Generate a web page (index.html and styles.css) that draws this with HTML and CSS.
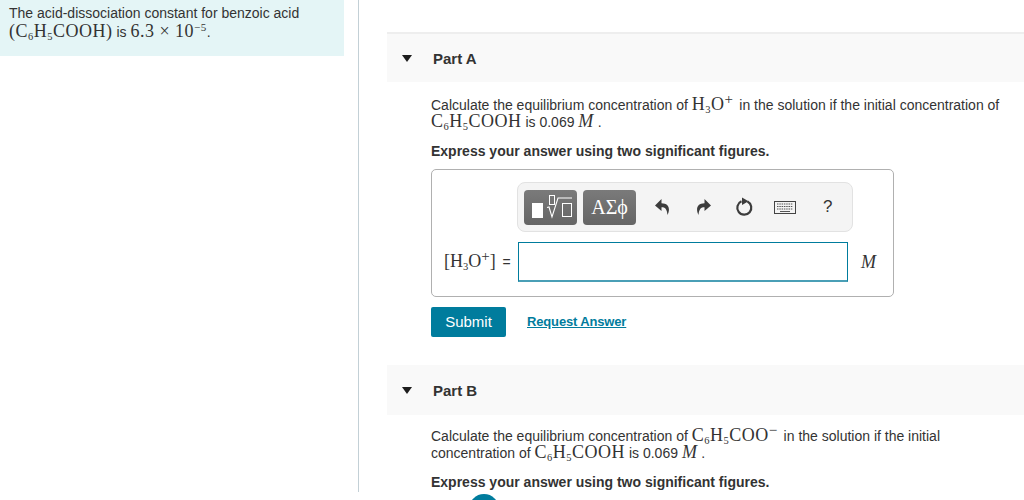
FILE: index.html
```html
<!DOCTYPE html>
<html lang="en">
<head>
<meta charset="utf-8">
<title>Benzoic acid</title>
<link rel="stylesheet" href="styles.css">
</head>
<body>
<div class="page">
  <aside class="left">
    <div class="intro">
      <div>The acid-dissociation constant for benzoic acid</div>
      <div class="intro-math"><span class="m big">(C<sub>6</sub>H<sub>5</sub>COOH)</span> is <span class="m big">6.3 × 10<sup class="sm">−5</sup></span>.</div>
    </div>
  </aside>
  <main class="right">
    <section class="part part-a">
      <header class="part-head">
        <span class="tri"></span><span class="part-title">Part A</span>
      </header>
      <div class="body">
        <p class="q">Calculate the equilibrium concentration of <span class="m big">H<sub>3</sub>O<sup>+</sup></span> in the solution if the initial concentration of<br><span class="m big">C<sub>6</sub>H<sub>5</sub>COOH</span> is 0.069 <span class="m big i">M</span> .</p>
        <p class="ins">Express your answer using two significant figures.</p>
        <div class="answer">
          <div class="toolbar-row">
            <div class="toolbar">
              <button class="tbtn tbtn-tpl" aria-label="Templates">
                <svg width="53" height="35" viewBox="0 0 53 35">
                  <rect x="8" y="13" width="11" height="15" fill="#fff"/>
                  <rect x="25.500" y="5.500" width="5" height="9" fill="none" stroke="#fff"/>
                  <path d="M23 17.500l2 -.5 3 10 6-19h14" fill="none" stroke="#fff" stroke-width="1.100"/>
                  <rect x="38.500" y="13.500" width="9" height="13" fill="none" stroke="#fff"/>
                </svg>
              </button>
              <button class="tbtn tbtn-sym">ΑΣϕ</button>
              <div class="tools">
                <svg class="tool" width="16" height="18" viewBox="0 0 16 18"><path d="M7.500 1L1 7.500 7.500 13V9.300C11 9.300 13 11 13.500 17 16.500 11 15 5.300 7.500 5.200Z" fill="#3c3c3c"/></svg>
                <svg class="tool" width="16" height="18" viewBox="0 0 16 18"><path d="M8.500 1L15 7.500 8.500 13V9.300C5 9.300 3 11 2.500 17-.5 11 1 5.300 8.500 5.200Z" fill="#3c3c3c"/></svg>
                <svg class="tool" width="18" height="20" viewBox="0 0 18 20"><path d="M6.500 4.300A7 7 0 1 0 12.500 4.500" fill="none" stroke="#3c3c3c" stroke-width="2.200"/><path d="M7 .5l6.500 3.800L7 8Z" fill="#3c3c3c"/></svg>
                <svg class="tool" width="22" height="13" viewBox="0 0 22 13"><rect x=".5" y=".5" width="21" height="12" fill="#f4f4f4" stroke="#444"/><path d="M3 3h16M3 5.500h16" stroke="#555" stroke-width="1.200" stroke-dasharray="1.500 .8"/><path d="M3 8h16" stroke="#555" stroke-width="1.200" stroke-dasharray="1.500 .8"/><path d="M6 10.500h10" stroke="#555"/></svg>
                <span class="tool help">?</span>
              </div>
            </div>
          </div>
          <div class="input-row">
            <span class="lhs"><span class="m big">[H<sub>3</sub>O<sup>+</sup>]</span> =</span>
            <input class="field" type="text" aria-label="answer">
            <span class="m unit">M</span>
          </div>
        </div>
        <div class="actions">
          <button class="submit">Submit</button>
          <a class="req" href="#">Request Answer</a>
        </div>
      </div>
    </section>
    <section class="part part-b">
      <header class="part-head part-head-b">
        <span class="tri"></span><span class="part-title">Part B</span>
      </header>
      <div class="body">
        <p class="q q-b">Calculate the equilibrium concentration of <span class="m big">C<sub>6</sub>H<sub>5</sub>COO<sup>−</sup></span> in the solution if the initial<br>concentration of <span class="m big">C<sub>6</sub>H<sub>5</sub>COOH</span> is 0.069 <span class="m big i">M</span> .</p>
        <p class="ins ins-b">Express your answer using two significant figures.</p>
        <div class="dot"></div>
      </div>
    </section>
  </main>
</div>
</body>
</html>
```

FILE: styles.css
```css
* { box-sizing: border-box; }
html, body { margin: 0; height: 500px; overflow: hidden; background: #fff; }
body { font-family: "Liberation Sans", Arial, sans-serif; font-size: 14px; color: #333; }
.page { display: flex; align-items: flex-start; width: 1024px; height: 500px; overflow: hidden; }
.left { width: 359px; height: 492px; border-right: 1px solid #c3d0d6; flex: none; }
.intro { width: 344px; height: 56px; background: #e4f5f6; padding: 5px 9px; line-height: 17px; }
.intro-math { margin-top: 2px; line-height: 17px; }
.m { font-family: "Liberation Serif", serif; }
.big { font-size: 18px; line-height: 0; letter-spacing: .5px; }
.i { font-style: italic; }
sub { font-size: 10.500px; line-height: 0; vertical-align: -3px; }
sup { margin-right: 2px; font-size: 15px; line-height: 0; vertical-align: 6px; }
sup.sm { margin-right: 0; font-size: 11px; }
.right { flex: 1; padding-left: 28px; min-width: 0; }
.part-head { display: flex; align-items: center; height: 50px; background: #f9f9f9; border-top: 2px solid #eee; }
.part-a { margin-top: 32px; }
.part-head-b { border-top: 0; }
.tri { width: 0; height: 0; margin-left: 15px; border-left: 5.500px solid transparent; border-right: 5.500px solid transparent; border-top: 7px solid #1d1d1d; }
.part-title { margin-left: 21px; font-size: 15px; font-weight: 700; color: #333; }
.body { padding-left: 44px; }
.q { margin: 15px 0 0; line-height: 17px; white-space: nowrap; }
.q-b { margin-top: 13px; }
.ins { margin: 12px 0 0; font-weight: 700; line-height: 17px; }
.answer { width: 463px; height: 128px; margin-top: 9px; border: 1px solid #b0b0b0; border-radius: 5px; padding: 12px 0 0 85px; }
.toolbar-row { display: flex; }
.toolbar { display: flex; align-items: center; width: 336px; height: 50px; padding: 0 6px; gap: 6px; background: #f4f4f4; border: 1px solid #e2e2e2; border-radius: 8px; }
.tbtn { display: flex; align-items: center; justify-content: center; height: 35px; padding: 0; border: 0; border-radius: 4px; background: linear-gradient(#7a7a7a, #656565); color: #fff; }
.tbtn-tpl { width: 53px; }
.tbtn-sym { width: 53px; font-family: "Liberation Serif", serif; font-size: 20px; }
.tools { display: flex; align-items: center; }
.tool { display: block; }
.tools svg:nth-child(1) { margin-left: 12px; }
.tools svg:nth-child(2) { margin-left: 26px; }
.tools svg:nth-child(3) { margin-left: 23px; }
.tools svg:nth-child(4) { margin-left: 21px; }
.help { margin-left: 27px; font-size: 17px; color: #333; }
.input-row { display: flex; align-items: center; height: 42px; margin: 9px 0 0 -85px; }
.lhs { width: 86px; padding-left: 12px; white-space: nowrap; }
.lhs .big { margin-right: 3px; letter-spacing: 0; }
.lhs sup { margin-right: 0; }
.field { width: 330px; height: 40px; border: 1px solid #007c9d; border-bottom: 2px solid #4a9fb6; background: #fff; outline: 0; }
.unit { margin-left: 13px; font-size: 18px; font-style: italic; }
.actions { display: flex; align-items: center; margin-top: 10px; }
.submit { width: 75px; height: 30px; padding: 0 0 2px; border: 0; border-radius: 2px; background: #007c9d; color: #fff; font: 15px "Liberation Sans", Arial, sans-serif; }
.req { margin-left: 21px; padding-bottom: 2px; color: #007c9d; font-size: 13px; font-weight: 700; letter-spacing: -.15px; text-decoration: underline; }
.part-b { margin-top: 28px; }
.ins-b { margin-top: 12px; }
.dot { width: 30px; height: 30px; margin: 3px 0 0 38px; border-radius: 50%; background: #007c9d; }
```
